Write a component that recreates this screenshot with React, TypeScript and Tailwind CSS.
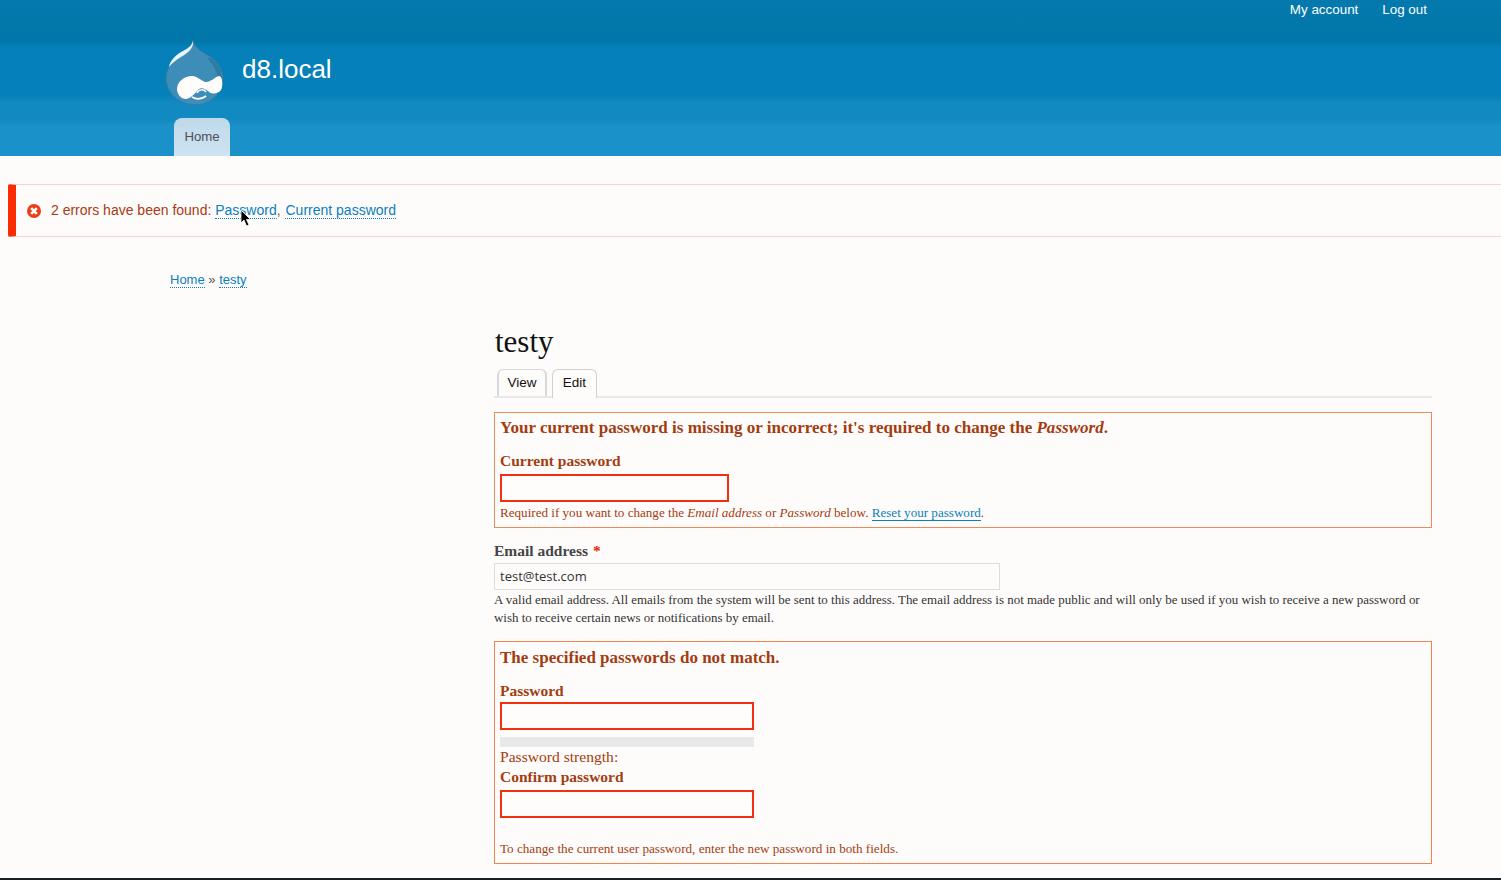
const sans = "font-['Liberation_Sans',Arial,sans-serif]"
const serif = "font-['Liberation_Serif',serif]"

const linkCls = 'text-[#0a7fbd] border-b border-dotted border-[#0a7fbd]'
const inputCls = 'block bg-[#fffdfc] border-2 border-[#f2300f] h-[28px]'

function DropLogo() {
  return (
    <svg width="60" height="68" viewBox="0 0 60 68" className="shrink-0">
      <path
        d="M28 1 C29 9 38 13 46 18 C54 24 58 32 58 39 C58 54 46 66 30 66 C14 66 1 54 1 39 C1 27 10 20 17 15 C23 11 27 8 28 1 Z"
        fill="#3e8cb8"
        stroke="#2f7ba6"
        strokeWidth="1"
      />
      <path d="M46 19 C54 25 57 32 57 40 C57 44 56 46 55 48 C54 38 50 27 42 19 Z" fill="#2f7ba6" />
      <path d="M28 2 C29 9 23 14 16 18 C11 21 7 24 4 28 C5 21 12 15 18 12 C24 9 27 6 28 2 Z" fill="#eaf3f8" />
      <path
        d="M12 50 C12 43 19 37 27 37 C33 37 37 43 41 43 C46 43 50 38 54 37 C58 37 58 48 56 51 C53 55 47 56 43 52 C39 49 36 48 33 51 C29 56 24 60 21 60 C16 60 12 55 12 50 Z"
        fill="#fffdfc"
      />
      <path d="M27 58 C32 61 37 60 41 57" fill="none" stroke="#fffdfc" strokeWidth="1.8" />
      <path d="M32 54 C34 50 39 50 41 53" fill="none" stroke="#fffdfc" strokeWidth="1.5" />
    </svg>
  )
}

function ErrorIcon() {
  return (
    <svg width="14" height="14" viewBox="0 0 14 14" className="shrink-0">
      <circle cx="7" cy="7" r="7" fill="#ee3d16" />
      <path d="M4.2 4.2 L9.8 9.8 M9.8 4.2 L4.2 9.8" stroke="#fffdfc" strokeWidth="2.6" />
    </svg>
  )
}

function Cursor() {
  return (
    <svg width="12" height="18" viewBox="0 0 12 18" className="absolute left-[240px] top-[209px]">
      <path d="M1 1 L1 14 L4 11 L6.5 17 L9 16 L6.5 10.5 L10.5 10.5 Z" fill="#000" stroke="#fff" strokeWidth="0.8" />
    </svg>
  )
}

export default function App() {
  return (
    <div className={`relative h-[880px] overflow-hidden bg-[#fefcfb] ${sans}`}>
      <header className="h-[156px] bg-[linear-gradient(180deg,#0479ad_0px,#0076a9_41px,#0580b8_48px,#0580b8_95px,#1189c1_102px,#1189c1_119px,#1a91c9_126px,#1a91c9_156px)]">
        <div className="flex justify-end gap-6 pr-[74px] pt-[2px] text-[13.4px] leading-[16px] text-white">
          <span>My account</span>
          <span>Log out</span>
        </div>
        <div className="flex items-center pl-[165px] pt-[21px]">
          <DropLogo />
          <span className="mb-[8px] ml-[17px] text-[26px] leading-[32px] text-white">d8.local</span>
        </div>
        <div className="pl-[174px] pt-[11px]">
          <div className="flex h-[38px] w-[56px] items-center justify-center rounded-t-[8px] bg-[linear-gradient(180deg,#bfd9ea,#cfe3f0)] text-[13.2px] text-[#4a4f55]">
            Home
          </div>
        </div>
      </header>

      <div className="ml-[8px] mt-[28px] flex h-[53px] items-center border-y border-l-[8px] border-y-[#f5d3d0] border-l-[#f92c04] rounded-l-[2px] pl-[11px] text-[14px] text-[#a83a14]">
        <ErrorIcon />
        <span className="ml-[10px]">
          2 errors have been found: <a className={linkCls}>Password</a>, <a className={`${linkCls} ml-[1px]`}>Current password</a>
        </span>
      </div>

      <div className="ml-[170px] mt-[35px] text-[13px] leading-[16px] text-[#555]">
        <a className={linkCls}>Home</a> » <a className={linkCls}>testy</a>
      </div>

      <main className={`ml-[494px] mt-[36px] w-[938px] ${serif}`}>
        <h1 className="pl-[1px] text-[31px] leading-[36px] text-[#111]">testy</h1>

        <div className={`mt-[9px] flex h-[29px] gap-[5px] border-b-2 border-[#e8e8e8] pl-[3px] text-[13.5px] text-[#111] ${sans}`}>
          <div className="flex h-[27px] w-[50px] items-center justify-center rounded-t-[6px] border-x-2 border-t border-[#d8d8d8]">View</div>
          <div className="flex h-[29px] w-[45px] items-center justify-center rounded-t-[6px] border-x border-t border-[#d0d0d0] bg-[#fefcfb] pb-[2px]">Edit</div>
        </div>

        <section className="mt-[14px] h-[116px] border border-[#ef8a5c] pl-[5px] pt-[5px] text-[#a33c10]">
          <p className="text-[17.05px] font-bold leading-[20px]">
            Your current password is missing or incorrect; it's required to change the <em>Password</em>.
          </p>
          <label className="mt-[14px] block text-[15.5px] font-bold leading-[18px]">Current password</label>
          <div className={`${inputCls} mt-[4px] w-[229px]`} />
          <p className="mt-[2px] text-[13.1px] leading-[18px]">
            Required if you want to change the <em>Email address</em> or <em>Password</em> below.{' '}
            <a className="text-[#0a7fbd] border-b border-[#0a7fbd]">Reset your password</a>.
          </p>
        </section>

        <div className="mt-[14px] text-[#444]">
          <label className="block text-[15.5px] font-bold leading-[18px]">
            Email address <span className="ml-[1px] text-[#e62600]">*</span>
          </label>
          <div className="mt-[3px] flex h-[27px] w-[506px] items-center border border-[#ddd] pl-[5px] font-['Open_Sans',sans-serif] text-[13px] text-[#333]">
            test@test.com
          </div>
          <p className="mt-[1px] text-[12.95px] leading-[18px] text-[#333]">
            A valid email address. All emails from the system will be sent to this address. The email address is not made public and will only be used if you wish to receive a new password or wish to receive certain news or notifications by email.
          </p>
        </div>

        <section className="mt-[14px] h-[223px] border border-[#f4844e] pl-[5px] pt-[6px] text-[#a33c10]">
          <p className="text-[17px] font-bold leading-[20px]">The specified passwords do not match.</p>
          <label className="mt-[14px] block text-[15.5px] font-bold leading-[18px]">Password</label>
          <div className={`${inputCls} mt-[2px] w-[254px]`} />
          <div className="mt-[7px] h-[10px] w-[254px] bg-[#e9e9e9]" />
          <p className="mt-[1px] text-[15.6px] leading-[18px]">Password strength:</p>
          <label className="mt-[2px] block text-[15.5px] font-bold leading-[18px]">Confirm password</label>
          <div className={`${inputCls} mt-[4px] w-[254px]`} />
          <p className="mt-[22px] text-[13.15px] leading-[18px]">
            To change the current user password, enter the new password in both fields.
          </p>
        </section>
      </main>

      <Cursor />
      <div className="absolute bottom-0 left-0 h-[2px] w-full bg-[#1a1f24]" />
    </div>
  )
}
